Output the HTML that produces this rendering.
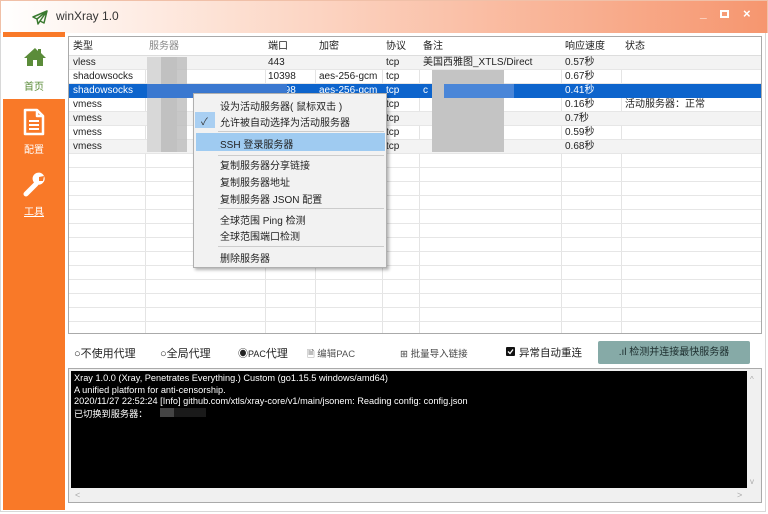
<!DOCTYPE html><html><head><meta charset="utf-8"><style>
*{margin:0;padding:0;box-sizing:border-box}
body{width:768px;height:514px;background:#fff;font-family:"Liberation Sans","Noto Sans CJK SC",sans-serif;font-size:10px;color:#222;position:relative;overflow:hidden}
.abs{position:absolute}
#win{left:0;top:0;width:766px;height:512px;border:1px solid #d8d8d8}
#title{left:0;top:0;width:768px;height:33px;background:linear-gradient(90deg,#fff 0%,#fde0d2 30%,#f6966f 100%);border:1px solid #f0c0a8;border-bottom:none}
#side{left:3px;top:32px;width:62px;height:478px;background:#f97928}
.si{position:absolute;left:0;width:62px;text-align:center;color:#fff;font-size:10px}
#tbl{left:68px;top:36px;width:694px;height:298px;border:1px solid #aaa;background:#fff;overflow:hidden}
.row{position:absolute;left:0;width:692px;height:14px;line-height:14px;border-bottom:1px solid #e6e6e6}
.row span{position:absolute;top:0;white-space:nowrap}
.vl{position:absolute;top:0;width:1px;height:298px;background:#e4e4e4}
#menu{left:193px;top:93px;width:194px;height:175px;background:#f2f2f2;border:1px solid #b0b0b0;box-shadow:2px 2px 3px rgba(0,0,0,.3);font-size:10px}
#menu div.it{position:absolute;left:26px;white-space:nowrap}
.sep{position:absolute;left:24px;width:166px;height:1px;background:#ccc}
#log{left:68px;top:368px;width:694px;height:135px;border:1px solid #aaa;background:#f0f0f0}
#logb{position:absolute;left:2px;top:2px;width:676px;height:117px;background:#000;color:#fff;font-size:9.2px;line-height:11.5px;padding:2px 3px}
</style></head><body>
<div id="win" class="abs"></div>
<div id="title" class="abs">
<svg class="abs" style="left:31px;top:9px" width="16" height="15" viewBox="0 0 16 15"><path d="M15 1L1 7l4 2 1 5 2-3 4 2z M5 9l10-8-7 10" fill="none" stroke="#3a7a30" stroke-width="1.5" stroke-linejoin="round"/></svg>
<div class="abs" style="left:55px;top:8px;font-size:12px;color:#333">winXray 1.0</div>
<div class="abs" style="left:699px;top:5px;color:#fff;font-size:12px;font-weight:bold">_</div>
<div class="abs" style="left:719px;top:9px;width:9px;height:8px;border:2px solid #fff"></div>
<div class="abs" style="left:742px;top:5px;color:#fff;font-size:13px;font-weight:bold">×</div>
</div>
<div id="side" class="abs">
<div class="abs" style="left:0;top:5px;width:62px;height:62px;background:#fff"></div>
<svg class="abs" style="left:20px;top:15px" width="24" height="20" viewBox="0 0 24 20"><path d="M12 1L1 11h3v8h6v-6h4v6h6v-8h3L18 6V2h-3v2z" fill="#5b8c3a"/></svg>
<div class="si" style="top:46px;color:#5b8c3a">首页</div>
<svg class="abs" style="left:20px;top:76px" width="22" height="28" viewBox="0 0 22 28"><path d="M2 2h12l6 6v18H2z M14 2v6h6" fill="none" stroke="#fff" stroke-width="2.5" stroke-linejoin="round"/><path d="M6 13h10M6 17h10M6 21h10" stroke="#fff" stroke-width="2"/></svg>
<div class="si" style="top:109px">配置</div>
<svg class="abs" style="left:20px;top:140px" width="25" height="25" viewBox="0 0 25 25"><path d="M3 22L13 12" stroke="#fff" stroke-width="5" stroke-linecap="round"/><path d="M13 12a6 6 0 1 1 8-8l-5 1 0 4 4 0 1-5a6 6 0 0 1-8 8z" fill="#fff"/></svg>
<div class="si" style="top:171px;text-decoration:underline">工具</div>
</div>
<div id="tbl" class="abs">
<div class="vl" style="left:76px"></div><div class="vl" style="left:196px"></div><div class="vl" style="left:246px"></div><div class="vl" style="left:313px"></div><div class="vl" style="left:350px"></div><div class="vl" style="left:492px"></div><div class="vl" style="left:552px"></div><div class="vl" style="left:692px"></div>
<div class="row" style="top:0;height:19px;line-height:19px;border-bottom:1px solid #ddd;background:#fff"><span style="left:4px">类型</span><span style="left:80px;color:#888">服务器</span><span style="left:199px">端口</span><span style="left:250px">加密</span><span style="left:317px">协议</span><span style="left:354px">备注</span><span style="left:496px">响应速度</span><span style="left:556px">状态</span></div>
<div class="row" style="top:19px;background:#f3f3f3"><span style="left:4px">vless</span><span style="left:199px">443</span><span style="left:317px">tcp</span><span style="left:354px">美国西雅图_XTLS/Direct</span><span style="left:496px">0.57秒</span></div>
<div class="row" style="top:33px"><span style="left:4px">shadowsocks</span><span style="left:199px">10398</span><span style="left:250px">aes-256-gcm</span><span style="left:317px">tcp</span><span style="left:496px">0.67秒</span></div>
<div class="row" style="top:47px;background:#0d64cc;color:#fff;border-color:#0d64cc"><span style="left:4px">shadowsocks</span><span style="left:199px">10398</span><span style="left:250px">aes-256-gcm</span><span style="left:317px">tcp</span><span style="left:354px">c</span><span style="left:496px">0.41秒</span></div>
<div class="row" style="top:61px"><span style="left:4px">vmess</span><span style="left:317px">tcp</span><span style="left:496px">0.16秒</span><span style="left:556px">活动服务器：正常</span></div>
<div class="row" style="top:75px;background:#f3f3f3"><span style="left:4px">vmess</span><span style="left:317px">tcp</span><span style="left:496px">0.7秒</span></div>
<div class="row" style="top:89px"><span style="left:4px">vmess</span><span style="left:317px">tcp</span><span style="left:496px">0.59秒</span></div>
<div class="row" style="top:103px;background:#f3f3f3"><span style="left:4px">vmess</span><span style="left:317px">tcp</span><span style="left:496px">0.68秒</span></div>
<div class="row" style="top:117px"></div><div class="row" style="top:131px"></div><div class="row" style="top:145px"></div><div class="row" style="top:159px"></div><div class="row" style="top:173px"></div><div class="row" style="top:187px"></div><div class="row" style="top:201px"></div><div class="row" style="top:215px"></div><div class="row" style="top:229px"></div><div class="row" style="top:243px"></div><div class="row" style="top:257px"></div><div class="row" style="top:271px"></div>
<div class="abs" style="left:78px;top:20px;width:30px;height:95px;background:#d8d8d8"></div>
<div class="abs" style="left:92px;top:20px;width:26px;height:95px;background:#bbb;opacity:.8"></div>
<div class="abs" style="left:78px;top:47px;width:140px;height:14px;background:#3a78d0"></div>
<div class="abs" style="left:363px;top:33px;width:72px;height:82px;background:#c4c4c4"></div>
<div class="abs" style="left:375px;top:47px;width:70px;height:14px;background:#4a86d8"></div>
</div>
<div id="menu" class="abs">
<div class="abs" style="left:1px;top:18px;width:20px;height:16px;background:#a9cff2"></div>
<div class="abs" style="left:7px;top:19px;font-size:10px;color:#333">✓</div>
<div class="abs" style="left:2px;top:39px;width:189px;height:18px;background:#9fcbf1"></div>
<div class="it" style="top:4px">设为活动服务器( 鼠标双击 )</div>
<div class="it" style="top:20px">允许被自动选择为活动服务器</div>
<div class="sep" style="top:37px"></div>
<div class="it" style="top:42px">SSH 登录服务器</div>
<div class="sep" style="top:61px"></div>
<div class="it" style="top:63px">复制服务器分享链接</div>
<div class="it" style="top:80px">复制服务器地址</div>
<div class="it" style="top:97px">复制服务器 JSON 配置</div>
<div class="sep" style="top:114px"></div>
<div class="it" style="top:118px">全球范围 Ping 检测</div>
<div class="it" style="top:134px">全球范围端口检测</div>
<div class="sep" style="top:152px"></div>
<div class="it" style="top:156px">删除服务器</div>
</div>
<div class="abs" style="left:74px;top:345px;font-size:11px;white-space:nowrap">○不使用代理</div>
<div class="abs" style="left:160px;top:345px;font-size:11px">○全局代理</div>
<div class="abs" style="left:238px;top:345px;font-size:11px"><span style="font-size:10px">◉</span><span style="font-size:9px">PAC</span>代理</div>
<div class="abs" style="left:307px;top:346px;font-size:9.5px;color:#555">🗎 编辑PAC</div>
<div class="abs" style="left:400px;top:346px;font-size:9.5px;color:#444">⊞ 批量导入链接</div>
<div class="abs" style="left:506px;top:347px;width:9px;height:9px;background:#111;border-radius:1px"></div>
<svg class="abs" style="left:507px;top:348px" width="7" height="7" viewBox="0 0 7 7"><path d="M1 3.5l2 2 3-4" fill="none" stroke="#fff" stroke-width="1.3"/></svg>
<div class="abs" style="left:519px;top:345px;font-size:10.5px">异常自动重连</div>
<div class="abs" style="left:598px;top:341px;width:152px;height:23px;background:#86aaa7;border-radius:2px;color:#1c2d2d;font-size:10px;line-height:23px;text-align:center">.ıl 检测并连接最快服务器</div>
<div id="log" class="abs"><div id="logb">Xray 1.0.0 (Xray, Penetrates Everything.) Custom (go1.15.5 windows/amd64)<br>A unified platform for anti-censorship.<br>2020/11/27 22:52:24 [Info] github.com/xtls/xray-core/v1/main/jsonem: Reading config: config.json<br>已切换到服务器： <span style="display:inline-block;width:14px;height:9px;background:#444;margin-left:10px"></span><span style="display:inline-block;width:32px;height:9px;background:#1a1a1a"></span></div>
<div class="abs" style="left:681px;top:6px;color:#aaa;font-size:8px">^</div>
<div class="abs" style="left:681px;top:108px;color:#aaa;font-size:8px">v</div>
<div class="abs" style="left:6px;top:121px;color:#aaa;font-size:9px">&lt;</div>
<div class="abs" style="left:668px;top:121px;color:#aaa;font-size:9px">&gt;</div>
</div>
</body></html>
